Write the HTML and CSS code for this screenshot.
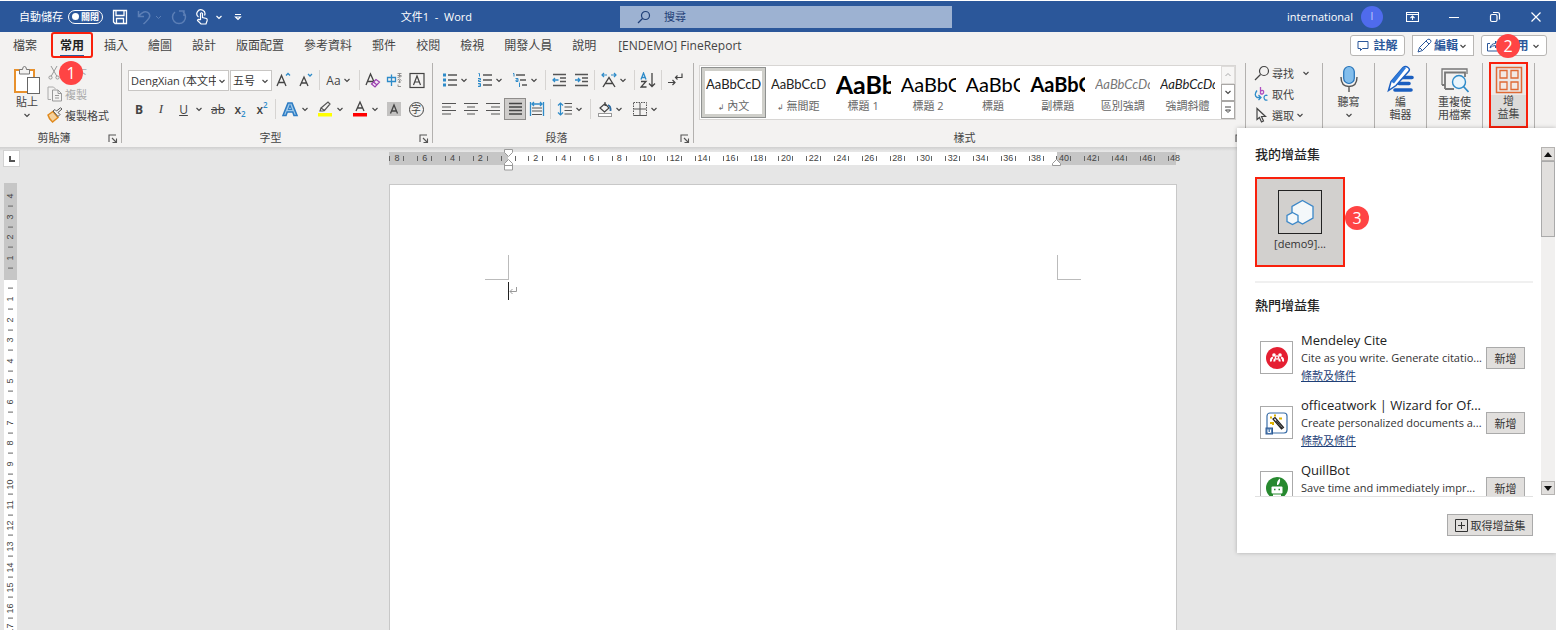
FILE: index.html
```html
<!DOCTYPE html>
<html lang="zh-Hant">
<head>
<meta charset="utf-8">
<title>文件1 - Word</title>
<link rel="stylesheet" href="styles.css">
</head>
<body>
<svg class="defs" aria-hidden="true">
  <symbol id="chev" viewBox="0 0 12 12"><path d="M3.500 5 L6 7.500 L8.500 5" fill="none" stroke="currentColor" stroke-width="1.100"/></symbol>
  <symbol id="launch" viewBox="0 0 10 10"><path d="M1 8V1H8 M4 4L8 8 M8.500 4.500V8.500H4.500" fill="none" stroke="#555" stroke-width="1.100"/></symbol>
</svg>
<div class="window">
  <header class="titlebar">
    <div class="title-left">
      <span class="autosave">自動儲存</span>
      <label class="toggle"><input type="checkbox" aria-label="自動儲存"><span>關閉</span></label>
      <button class="qa qa-save" aria-label="儲存"><svg width="16" height="16" viewBox="0 0 16 16"><path d="M1.500 1.500H14.500V14.500H3L1.500 13Z M4 1.500V6.500H12V1.500 M4.500 14.500V9.500H11.500V14.500" fill="none" stroke="#fff" stroke-width="1.300"/></svg></button>
      <button class="qa qa-undo" aria-label="復原"><svg width="26" height="16" viewBox="0 0 26 16"><path d="M1.500 2V7.500H7 M1.500 7.500C5 2.500 9 1.500 11.500 4C14.500 7 12 10 6.500 15" fill="none" stroke="#5c7fb6" stroke-width="1.500"/><path d="M19 7L21.500 9.500L24 7" fill="none" stroke="#5c7fb6"/></svg></button>
      <button class="qa qa-redo" aria-label="重複"><svg width="16" height="16" viewBox="0 0 16 16"><path d="M4 3A6.500 6.500 0 1 0 12 3 M8 2H13V7" fill="none" stroke="#5c7fb6" stroke-width="1.500"/></svg></button>
      <button class="qa qa-touch" aria-label="觸控/滑鼠模式"><svg width="28" height="16" viewBox="0 0 28 16"><path d="M3.500 8A4 4 0 1 1 9.500 6.500 M5.500 11V4.500Q6.500 3 7.500 4.500V8.500L11.500 9.500Q12.500 10 12 12L11 15H6L2.500 11.500Q3 9.500 5.500 11" fill="none" stroke="#fff" stroke-width="1.200"/><path d="M21.500 7L24 9.500L26.500 7" fill="none" stroke="#fff" stroke-width="1.200"/></svg></button>
      <button class="qa" aria-label="自訂快速存取工具列"><svg width="10" height="10" viewBox="0 0 10 10"><path d="M2 2.500H8 M2.500 5L5 7.500L7.500 5Z" fill="none" stroke="#fff" stroke-width="1.100"/></svg></button>
      <h1 class="doc-title">文件1&nbsp; -&nbsp; Word</h1>
    </div>
    <label class="search"><svg width="14" height="14" viewBox="0 0 14 14"><circle cx="8.500" cy="5.500" r="4" fill="none" stroke="#1f3f77" stroke-width="1.200"/><path d="M5.500 8.500L1 13" stroke="#1f3f77" stroke-width="1.300"/></svg><input type="search" placeholder="搜尋" aria-label="搜尋"></label>
    <div class="title-right">
      <span class="user">international</span><span class="avatar">I</span>
      <button class="win" aria-label="功能區顯示選項"><svg width="13" height="12" viewBox="0 0 13 12"><path d="M.5 1.500H12.500V10.500H.5Z M.5 3.500H12.500 M6.500 9V5 M4.500 7L6.500 5L8.500 7" fill="none" stroke="#fff" stroke-width="1.100"/></svg></button>
      <button class="win" aria-label="最小化"><svg width="12" height="12" viewBox="0 0 12 12"><path d="M1 6.500H11" stroke="#fff"/></svg></button>
      <button class="win" aria-label="還原"><svg width="12" height="12" viewBox="0 0 12 12"><rect x="1.500" y="3.500" width="6.500" height="7" rx="1.500" fill="none" stroke="#fff" stroke-width="1.200"/><path d="M4 1.500H8.500Q10.500 1.500 10.500 3.500V8.500" fill="none" stroke="#fff" stroke-width="1.200"/></svg></button>
      <button class="win" aria-label="關閉"><svg width="12" height="12" viewBox="0 0 12 12"><path d="M1.500 1.500L10.500 10.500M10.500 1.500L1.500 10.500" stroke="#fff" stroke-width="1.200"/></svg></button>
    </div>
  </header>

  <div class="tabbar">
    <nav class="tabs">
      <button class="tab tab-file">檔案</button>
      <button class="tab tab-active"><span>常用</span><b class="badge badge-tab">1</b></button>
      <button class="tab">插入</button><button class="tab">繪圖</button><button class="tab">設計</button>
      <button class="tab">版面配置</button><button class="tab">參考資料</button><button class="tab">郵件</button>
      <button class="tab">校閱</button><button class="tab">檢視</button><button class="tab">開發人員</button>
      <button class="tab">說明</button><button class="tab tab-latin">[ENDEMO] FineReport</button>
    </nav>
    <div class="tab-actions">
      <button class="pill pill-note"><svg width="12" height="12" viewBox="0 0 12 12"><path d="M1 1.500H11V8.500H5.500L3.500 10.500V8.500H1Z" fill="none" stroke="#2b579a"/></svg>註解</button>
      <button class="pill pill-edit"><svg width="15" height="15" viewBox="0 0 15 15"><path d="M1 14L2.500 9.500L10.500 1.500Q12 .5 13.500 2Q14.500 3.500 13.500 4.500L5.500 12.500Z M9 3L12 6 M2.500 9.500L5.500 12.500" fill="none" stroke="#2b579a"/></svg>編輯<svg class="chev" width="12" height="12"><use href="#chev"/></svg></button>
      <button class="pill pill-share"><svg width="14" height="13" viewBox="0 0 14 13"><path d="M4 4.500H1.500V12H11.500V9 M4 9Q5 4.500 9.500 4.500V2L13 5.500L9.500 9V6.500Q6 6.500 4 9Z" fill="none" stroke="#2b579a"/></svg>共用<svg class="chev" width="12" height="12"><use href="#chev"/></svg></button>
    </div>
  </div>

  <div class="ribbon">
    <section class="group g-clip">
      <div class="clip">
        <button class="large paste"><svg width="28" height="30" viewBox="0 0 28 30"><rect x="2" y="5" width="19" height="22" fill="#fff" stroke="#e8912d" stroke-width="2"/><path d="M6.500 9V4.500H9.500Q9.500 1.500 11.500 1.500T13.500 4.500H16.500V9Z" fill="#f3f2f1" stroke="#777"/><rect x="14.500" y="12.500" width="12" height="16" fill="#fff" stroke="#666"/></svg><span>貼上</span><svg class="chev" width="12" height="12"><use href="#chev"/></svg></button>
        <div class="stack stack-clip">
          <button class="line off"><svg width="16" height="16" viewBox="0 0 16 16"><path d="M4 1L10 11.500 M10 1L4 11.500" fill="none" stroke="#999"/><circle cx="3.500" cy="12.500" r="1.600" fill="none" stroke="#999"/><circle cx="10.500" cy="12.500" r="1.600" fill="none" stroke="#999"/></svg>剪下</button>
          <button class="line off"><svg width="16" height="16" viewBox="0 0 16 16"><path d="M4 13.500H1V1H6.500L8.500 3" fill="none" stroke="#aaa"/><path d="M5.500 4H11L14.500 7.500V15H5.500Z M11 4V7.500H14.500 M8 9.500H12 M8 12H12" fill="none" stroke="#999"/></svg>複製</button>
          <button class="line"><svg width="16" height="16" viewBox="0 0 16 16"><path d="M1 8L6 4.500L11 10.500L5.500 15Q2 12 1 8Z" fill="#f6d19b" stroke="#e08a1e" stroke-width="1.500"/><path d="M6 4L11 9.500L13 7.500L11 5.500L15 2L13.500 .8L9.500 4L8 2.500Z" fill="#f3f2f1" stroke="#555"/></svg>複製格式</button>
        </div>
      </div>
      <footer><span>剪貼簿</span><button aria-label="剪貼簿設定"><svg width="10" height="10"><use href="#launch"/></svg></button></footer>
    </section>

    <section class="group g-font">
      <div class="row">
        <div class="combo combo-face"><select aria-label="字型"><option>DengXian (本文中文字型)</option></select><svg class="chev" width="12" height="12"><use href="#chev"/></svg></div>
        <div class="combo combo-size"><select aria-label="字型大小"><option>五号</option></select><svg class="chev" width="12" height="12"><use href="#chev"/></svg></div>
        <button class="t" aria-label="放大字型"><svg width="18" height="18" viewBox="0 0 18 18"><path d="M2 15L6.500 4.500L11 15M3.500 11.500H9.500" fill="none" stroke="#444" stroke-width="1.300"/><path d="M11 4.500L13 2.500L15 4.500" fill="none" stroke="#2e8bc9" stroke-width="1.300"/></svg></button>
        <button class="t" aria-label="縮小字型"><svg width="18" height="18" viewBox="0 0 18 18"><path d="M3 15L7 6L11 15M4.500 12H9.500" fill="none" stroke="#444" stroke-width="1.300"/><path d="M11 3L13 5L15 3" fill="none" stroke="#2e8bc9" stroke-width="1.300"/></svg></button>
        <i class="sep"></i>
        <button class="t wide case">Aa<svg class="chev" width="12" height="12"><use href="#chev"/></svg></button>
        <i class="sep"></i>
        <button class="t" aria-label="清除格式"><svg width="18" height="18" viewBox="0 0 18 18"><path d="M2 14L6.500 3L11 13M3.500 10.500H9" fill="none" stroke="#444" stroke-width="1.300"/><path d="M7.500 13L12 8.500L15.500 11L11 16Z M9.500 11L13 14" fill="#f3e6f5" stroke="#9b3fb0" stroke-width="1.200"/></svg></button>
        <button class="t" aria-label="注音標示"><svg width="18" height="18" viewBox="0 0 18 18"><path d="M1.500 6.500H9.500V10.500H1.500Z M5.500 3.500V15" fill="none" stroke="#2e8bc9" stroke-width="1.300"/><path d="M11.500 2.500H15.500 M11.500 4.500H15.500 M13.500 2V6 M11.500 6.500L15.500 5.500 M11.500 9L13.500 8L15.500 9.500 M12 11H15 M13.500 9V12 M12 13.500V15.500H15" fill="none" stroke="#888" stroke-width=".9"/></svg></button>
        <button class="t" aria-label="字元框線"><svg width="18" height="18" viewBox="0 0 18 18"><rect x="2" y="2.500" width="14" height="14" fill="none" stroke="#444" stroke-width="1.200"/><path d="M5.500 14L9 5L12.500 14M6.500 11H11.500" fill="none" stroke="#444" stroke-width="1.200"/></svg></button>
      </div>
      <div class="row">
        <button class="t bold">B</button><button class="t ital">I</button>
        <button class="t wide"><u>U</u><svg class="chev" width="12" height="12"><use href="#chev"/></svg></button>
        <button class="t strike"><s>ab</s></button>
        <button class="t script">x<sub>2</sub></button><button class="t script">x<sup>2</sup></button>
        <i class="sep"></i>
        <button class="t wide" aria-label="文字效果"><svg width="18" height="18" viewBox="0 0 18 18"><path d="M2 15.500L7 3H11L16 15.500H13L11.800 12H6.200L5 15.500Z" fill="#9cc8ea" stroke="#2e7cc3" stroke-width="1.600"/><path d="M7.500 9.500L9 5.500L10.500 9.500Z" fill="#fff" stroke="#2e7cc3" stroke-width="1.200"/></svg><svg class="chev" width="12" height="12"><use href="#chev"/></svg></button>
        <button class="t wide" aria-label="螢光筆"><svg width="18" height="18" viewBox="0 0 18 18"><path d="M5 8L12 2L14 4L8.500 10.500Z M5 8L4 11H7L8.500 10.500" fill="none" stroke="#555" stroke-width="1.200"/><rect x="2" y="13" width="14" height="3.500" fill="#ff0"/></svg><svg class="chev" width="12" height="12"><use href="#chev"/></svg></button>
        <button class="t wide" aria-label="字型色彩"><svg width="18" height="18" viewBox="0 0 18 18"><path d="M5 11L9 2L13 11M6.500 8H11.500" fill="none" stroke="#444" stroke-width="1.300"/><rect x="2" y="13" width="14" height="3.500" fill="#f00"/></svg><svg class="chev" width="12" height="12"><use href="#chev"/></svg></button>
        <button class="t" aria-label="字元網底"><svg width="18" height="18" viewBox="0 0 18 18"><rect x="2" y="2" width="14" height="14" fill="#c3c2c1"/><path d="M5.500 13.500L9 5L12.500 13.500M6.500 11H11.500" fill="none" stroke="#444" stroke-width="1.300"/></svg></button>
        <button class="t ring"><span>字</span></button>
      </div>
      <footer><span>字型</span><button aria-label="字型設定"><svg width="10" height="10"><use href="#launch"/></svg></button></footer>
    </section>

    <section class="group g-para">
      <div class="row">
        <button class="t wide" aria-label="項目符號"><svg width="16" height="16" viewBox="0 0 16 16"><path d="M6 3H15M6 8H15M6 13H15" stroke="#555" stroke-width="1.300"/><path d="M1 3H4M1 8H4M1 13H4" stroke="#2e8bc9" stroke-width="3"/></svg><svg class="chev" width="12" height="12"><use href="#chev"/></svg></button>
        <button class="t wide" aria-label="編號"><svg width="16" height="16" viewBox="0 0 16 16"><path d="M6 3H15M6 8H15M6 13H15" stroke="#555" stroke-width="1.300"/><path d="M1.500 1.500H2.500V4.500 M1 6.500H3.500V8H1.500V9.500H4 M1 11.500H3.500V14.500H1 M1.500 13H3.500" fill="none" stroke="#2e8bc9"/></svg><svg class="chev" width="12" height="12"><use href="#chev"/></svg></button>
        <button class="t wide" aria-label="多層次清單"><svg width="16" height="16" viewBox="0 0 16 16"><path d="M4 3H13M8 8H14M10 13H15" stroke="#555" stroke-width="1.300"/><path d="M1 1.500H2V4.500 M3.500 6.500H6V9.500H4V8H6 M7.500 11V15 M7.500 9.800V10.400" fill="none" stroke="#2e8bc9"/></svg><svg class="chev" width="12" height="12"><use href="#chev"/></svg></button>
        <i class="sep"></i>
        <button class="t" aria-label="減少縮排"><svg width="16" height="16" viewBox="0 0 16 16"><path d="M2 2.500H15M9 6H15M9 9.500H15M2 13.500H15" stroke="#555" stroke-width="1.300"/><path d="M7.500 8H2M4 6L2 8L4 10" fill="none" stroke="#2e8bc9" stroke-width="1.300"/></svg></button>
        <button class="t" aria-label="增加縮排"><svg width="16" height="16" viewBox="0 0 16 16"><path d="M2 2.500H15M9 6H15M9 9.500H15M2 13.500H15" stroke="#555" stroke-width="1.300"/><path d="M2 8H7.500M5 6L7 8L5 10" fill="none" stroke="#2e8bc9" stroke-width="1.300"/></svg></button>
        <i class="sep"></i>
        <button class="t wide" aria-label="亞洲配置"><svg width="16" height="16" viewBox="0 0 16 16"><path d="M2 15L8 5.500L14 15M4.500 11.500H11.500" fill="none" stroke="#444" stroke-width="1.400"/><path d="M1 3H6M3 1L1 3L3 5 M10 3H15M13 1L15 3L13 5" fill="none" stroke="#2e8bc9" stroke-width="1.200"/></svg><svg class="chev" width="12" height="12"><use href="#chev"/></svg></button>
        <i class="sep"></i>
        <button class="t" aria-label="排序"><svg width="16" height="16" viewBox="0 0 16 16"><path d="M1 7.500L3.500 1L6 7.500M2 5.500H5" fill="none" stroke="#2e8bc9" stroke-width="1.300"/><path d="M1 9.500H6L1 15H6.500 M12 1V14.500M9 11.500L12 14.500L15 11.500" fill="none" stroke="#444" stroke-width="1.300"/></svg></button>
        <i class="sep"></i>
        <button class="t" aria-label="顯示編輯標記"><svg width="16" height="16" viewBox="0 0 16 16"><path d="M15 1.500V5.500H8.500M10.500 3.500L8.500 5.500L10.500 7.500 M1 10.500H8M5.500 8L8 10.500L5.500 13" fill="none" stroke="#444" stroke-width="1.200"/></svg></button>
      </div>
      <div class="row">
        <button class="t" aria-label="靠左對齊"><svg width="16" height="16" viewBox="0 0 16 16"><path d="M1 2.500H15M1 6H10M1 9.500H15M1 13H10" stroke="#555" stroke-width="1.200"/></svg></button>
        <button class="t" aria-label="置中"><svg width="16" height="16" viewBox="0 0 16 16"><path d="M1 2.500H15M4 6H12M1 9.500H15M4 13H12" stroke="#555" stroke-width="1.200"/></svg></button>
        <button class="t" aria-label="靠右對齊"><svg width="16" height="16" viewBox="0 0 16 16"><path d="M1 2.500H15M6 6H15M1 9.500H15M6 13H15" stroke="#555" stroke-width="1.200"/></svg></button>
        <button class="t pressed" aria-label="左右對齊"><svg width="16" height="16" viewBox="0 0 16 16"><path d="M2 2.500H15M2 6H15M2 9.500H15M2 13H15" stroke="#444" stroke-width="1.300"/></svg></button>
        <button class="t" aria-label="分散對齊"><svg width="16" height="16" viewBox="0 0 16 16"><path d="M1.500 1V15M14.500 1V15 M3 3H13M5 1L3 3L5 5M11 1L13 3L11 5" fill="none" stroke="#2e8bc9" stroke-width="1.300"/><path d="M3 7H13M3 10H13M3 13.500H13" stroke="#555" stroke-width="1.200"/></svg></button>
        <i class="sep"></i>
        <button class="t wide" aria-label="行距"><svg width="16" height="16" viewBox="0 0 16 16"><path d="M3.500 2V14M1 4.500L3.500 2L6 4.500M1 11.500L3.500 14L6 11.500" fill="none" stroke="#2e8bc9" stroke-width="1.200"/><path d="M7.500 2.500H15M7.500 6H15M7.500 9.500H15M7.500 13H15" stroke="#555" stroke-width="1.200"/></svg><svg class="chev" width="12" height="12"><use href="#chev"/></svg></button>
        <i class="sep"></i>
        <button class="t wide" aria-label="網底"><svg width="16" height="16" viewBox="0 0 16 16"><path d="M3 7L8 2.500L12 7L7.500 11Z M8 5V1" fill="none" stroke="#444" stroke-width="1.200"/><path d="M11 4Q14 5 13.500 10" fill="none" stroke="#2e6da4" stroke-width="1.800"/><rect x="1.500" y="12.500" width="13" height="3" fill="#fff" stroke="#999"/></svg><svg class="chev" width="12" height="12"><use href="#chev"/></svg></button>
        <button class="t wide" aria-label="框線"><svg width="16" height="16" viewBox="0 0 16 16"><rect x="1.500" y="1.500" width="13" height="13" fill="none" stroke="#555" stroke-dasharray="1.500 1"/><path d="M8 2V14M2 8H14M1.500 14.500H14.500" stroke="#555"/></svg><svg class="chev" width="12" height="12"><use href="#chev"/></svg></button>
      </div>
      <footer><span>段落</span><button aria-label="段落設定"><svg width="10" height="10"><use href="#launch"/></svg></button></footer>
    </section>

    <section class="group g-styles">
      <div class="gallery">
        <div class="tiles">
          <button class="tile tile-on"><span class="s s-body">AaBbCcDc</span><small><em>↲</em> 內文</small></button>
          <button class="tile"><span class="s s-body">AaBbCcDc</span><small><em>↲</em> 無間距</small></button>
          <button class="tile"><span class="s s-h1">AaBb</span><small>標題 1</small></button>
          <button class="tile"><span class="s s-h2">AaBbC</span><small>標題 2</small></button>
          <button class="tile"><span class="s s-h2">AaBbC</span><small>標題</small></button>
          <button class="tile"><span class="s s-sub">AaBbC</span><small>副標題</small></button>
          <button class="tile"><span class="s s-body s-soft">AaBbCcDc</span><small>區別強調</small></button>
          <button class="tile"><span class="s s-body s-em">AaBbCcDc</span><small>強調斜體</small></button>
        </div>
        <div class="spin">
          <button class="spin-off" aria-label="上一列"><svg width="12" height="12" viewBox="0 0 12 12"><path d="M3.500 7L6 4.500L8.500 7" fill="none" stroke="#aaa"/></svg></button>
          <button aria-label="下一列"><svg width="12" height="12"><use href="#chev"/></svg></button>
          <button aria-label="其他"><svg width="12" height="12" viewBox="0 0 12 12"><path d="M3 3H9M3.500 6L6 8.500L8.500 6Z" fill="none" stroke="#444"/></svg></button>
        </div>
      </div>
      <footer><span>樣式</span><button aria-label="樣式設定"><svg width="10" height="10"><use href="#launch"/></svg></button></footer>
    </section>

    <section class="group g-edit">
      <div class="stack">
        <button class="line"><svg width="16" height="16" viewBox="0 0 16 16"><circle cx="10" cy="6" r="4.500" fill="none" stroke="#444" stroke-width="1.200"/><path d="M6.500 9.500L1 15" stroke="#444" stroke-width="1.300"/></svg>尋找<svg class="chev far" width="12" height="12"><use href="#chev"/></svg></button>
        <button class="line"><svg width="16" height="16" viewBox="0 0 16 16"><path d="M6.500 1V8M6.500 5.500Q8 3.500 9.500 5Q10 7.500 8.500 8H6.500" fill="none" stroke="#b04fc0" stroke-width="1.300"/><path d="M13.500 9.500Q10.500 8.500 10 11.500Q10.500 15 13.500 14 M3 4.500Q-.5 9 3 11.500H7M4.500 9L7 11.500L4.500 14" fill="none" stroke="#2e8bc9" stroke-width="1.300"/></svg>取代</button>
        <button class="line"><svg width="16" height="16" viewBox="0 0 16 16"><path d="M3 1.500V12.500L5.500 10.500L7.500 15L9.500 14L7.500 9.500H11.500Z" fill="none" stroke="#444" stroke-width="1.200"/></svg>選取<svg class="chev near" width="12" height="12"><use href="#chev"/></svg></button>
      </div>
    </section>
    <section class="group g-large"><button class="large"><svg width="28" height="30" viewBox="0 0 28 30"><path d="M6 12Q6 21.500 14 21.500T22 12 M14 21.500V27" fill="none" stroke="#555" stroke-width="1.400"/><rect x="8.700" y="1.500" width="10.600" height="17" rx="5.300" fill="#83beec" stroke="#2372b8" stroke-width="1.200"/></svg><span>聽寫</span><svg class="chev" width="12" height="12"><use href="#chev"/></svg></button></section>
    <section class="group g-large"><button class="large"><svg width="28" height="30" viewBox="0 0 28 30"><path d="M15 12.500H25M12 18.500H22M8 25H24" stroke="#1b5fc0" stroke-width="3.600" stroke-linecap="round"/><path d="M1.500 25.500L4 16.500L16 2.500Q18.500 .5 21 2.500T21.500 6.500L9 20.500Z" fill="#fff" stroke="#1b5fc0" stroke-width="1.500"/><path d="M4 16.500L16 2.500Q18 1.500 19 3L7 18.500Z" fill="#2f7ad9"/></svg><span>編<br>輯器</span></button></section>
    <section class="group g-reuse"><button class="large"><svg width="28" height="30" viewBox="0 0 28 30"><path d="M1 20V4H26V9" fill="none" stroke="#777" stroke-width="1.300"/><path d="M4 24V7.500H24V12 M1 20H4 M4 24H13" fill="none" stroke="#777" stroke-width="1.800"/><circle cx="18" cy="17" r="6.500" fill="#e9f5fc" stroke="#2e8bc9" stroke-width="1.400"/><path d="M22.500 21.500L27.500 27" stroke="#2e8bc9" stroke-width="1.700"/></svg><span>重複使<br>用檔案</span></button></section>
    <section class="group g-addin"><button class="large addin"><svg width="28" height="28" viewBox="0 0 28 28"><rect x="1.500" y="1.500" width="25" height="25" fill="none" stroke="#df6a35" stroke-width="1.500"/><path d="M5 4.500H12V12H5ZM16 4.500H23V12H16ZM5 16H12V23.500H5ZM16 16H23V23.500H16Z" fill="#f3e9e4" stroke="#df6a35" stroke-width="1.300"/></svg><span>增<br>益集</span><b class="badge badge-addin">2</b></button></section>
  </div>

  <main class="workspace">
    <div class="side">
      <button class="tabstop" aria-label="定位點"><svg width="8" height="8" viewBox="0 0 8 8"><path d="M2 1V6H7" fill="none" stroke="#555" stroke-width="2"/></svg></button>
      <ol class="vruler"><li>4</li><li>3</li><li>2</li><li>1</li><li></li><li>1</li><li>2</li><li>3</li><li>4</li><li>5</li><li>6</li><li>7</li><li>8</li><li>9</li><li>10</li><li>11</li><li>12</li><li>13</li><li>14</li><li>15</li><li>16</li><li>17</li></ol>
    </div>
    <div class="canvas">
      <div class="hruler">
        <ol><li>8</li><li>6</li><li>4</li><li>2</li><li></li><li>2</li><li>4</li><li>6</li><li>8</li><li>10</li><li>12</li><li>14</li><li>16</li><li>18</li><li>20</li><li>22</li><li>24</li><li>26</li><li>28</li><li>30</li><li>32</li><li>34</li><li>36</li><li>38</li><li>40</li><li>42</li><li>44</li><li>46</li><li>48</li></ol>
        <svg class="mark mark-left" width="9" height="22" viewBox="0 0 9 22"><path d="M.5 .5H8.500V3.500L4.500 7.500L.5 3.500Z M4.500 10.500L8.500 14.500V21H.5V14.500Z M.5 16.500H8.500" fill="#fff" stroke="#999"/></svg>
        <svg class="mark mark-right" width="9" height="7" viewBox="0 0 9 7"><path d="M4.500 .5L8.500 4.500V6.500H.5V4.500Z" fill="#fff" stroke="#999"/></svg>
      </div>
      <article class="page">
        <div class="crops"><i class="crop-l"></i><i class="crop-r"></i></div>
        <p class="para"><svg width="9" height="10" viewBox="0 0 9 10"><path d="M7.500 1V5.500H1M3.500 3L1 5.500L3.500 8" fill="none" stroke="#999"/></svg></p>
      </article>
    </div>
  </main>

  <aside class="panel">
    <div class="panel-main">
      <div class="panel-scroll">
        <h2>我的增益集</h2>
        <button class="card"><span class="card-icon"><svg width="30" height="28" viewBox="0 0 30 28"><path d="M17.500 2.500L28 8.500V20L17.500 26L7 20V8.500Z" fill="#f4f8fa" stroke="#3b87c8" stroke-width="1.300"/><path d="M7.500 14.500L13 17.500V23.500L7.500 26.500L2 23.500V17.500Z" fill="#f4f8fa" stroke="#3b87c8" stroke-width="1.300"/></svg></span><span>[demo9]...</span><b class="badge badge-card">3</b></button>
        <hr>
        <h2>熱門增益集</h2>
        <div class="item">
          <span class="item-icon"><svg width="24" height="24" viewBox="0 0 24 24"><circle cx="12" cy="12" r="11" fill="#e51f32"/><path d="M6 15.500Q5.500 12 8 11.500M18 15.500Q18.500 12 16 11.500M9.500 15.500Q9 13.500 10.500 13M14.500 15.500Q15 13.500 13.500 13" fill="none" stroke="#fff" stroke-width="2"/><circle cx="9" cy="9" r="1.800" fill="#fff"/><circle cx="15" cy="9" r="1.800" fill="#fff"/><circle cx="12" cy="11.500" r="2.200" fill="#fff"/><circle cx="12" cy="11.500" r=".9" fill="#e51f32"/></svg></span>
          <div class="item-text"><h3>Mendeley Cite</h3><p>Cite as you write. Generate citatio...</p><a href="#">條款及條件</a></div>
          <button class="add">新增</button>
        </div>
        <div class="item">
          <span class="item-icon"><svg width="24" height="24" viewBox="0 0 24 24"><rect x="2" y="2" width="20" height="20" rx="3" fill="#fff" stroke="#3a6ea8" stroke-width="1.200"/><path d="M8 8L10 6.500L18.500 16.500L16.500 18Z" fill="#fff" stroke="#222" stroke-width="1.200"/><path d="M11 9.500L17 17" stroke="#222" stroke-width="1.200"/><path d="M5 6.500H7M9 4.500H11M14 7.500H17M5 12H7.500M8 11V14" stroke="#e0b400" stroke-width="2"/><rect x="1" y="17" width="6.500" height="6" fill="#5d86b7" stroke="#2f5b94"/><path d="M3 18.500V21.500H5.500V18.500" stroke="#fff" fill="none"/></svg></span>
          <div class="item-text"><h3>officeatwork | Wizard for Of...</h3><p>Create personalized documents a...</p><a href="#">條款及條件</a></div>
          <button class="add">新增</button>
        </div>
        <div class="item">
          <span class="item-icon"><svg width="24" height="24" viewBox="0 0 24 24"><circle cx="12" cy="12" r="11" fill="#27892f"/><path d="M12 9Q11.500 4.500 15 2.500Q15.500 6.500 13 9Z" fill="#fff"/><rect x="6.500" y="10.500" width="11" height="7" rx="1" fill="#fff"/><path d="M9 13.500H10.500M13.500 13.500H15" stroke="#27892f" stroke-width="1.600"/><rect x="8" y="18.500" width="8" height="4" fill="#fff"/></svg></span>
          <div class="item-text"><h3>QuillBot</h3><p>Save time and immediately impr...</p><a href="#">條款及條件</a></div>
          <button class="add">新增</button>
        </div>
      </div>
      <div class="scrollbar">
        <button aria-label="向上捲動"><svg width="8" height="5" viewBox="0 0 8 5"><path d="M0 5L4 0L8 5Z" fill="#111"/></svg></button>
        <div class="thumb"></div>
        <button class="down" aria-label="向下捲動"><svg width="8" height="5" viewBox="0 0 8 5"><path d="M0 0L4 5L8 0Z" fill="#111"/></svg></button>
      </div>
    </div>
    <div class="panel-foot"><button class="more"><svg width="13" height="13" viewBox="0 0 13 13"><path d="M.5 .5H12.500V12.500H.5ZM6.500 3V10M3 6.500H10" fill="none" stroke="#333"/></svg>取得增益集</button></div>
  </aside>
</div>
</body>
</html>
```
FILE: styles.css
```css
* { box-sizing: border-box; }
body { margin: 0; background: #fff; color: #444; font: 11px/13px "Open Sans", "Noto Sans CJK TC", sans-serif; }
button { font: inherit; color: inherit; background: none; border: 0; padding: 0; margin: 0; white-space: nowrap; }
h1, h2, h3, p, ol { margin: 0; padding: 0; font: inherit; list-style: none; }
svg { display: block; flex: none; }
.defs { position: absolute; width: 0; height: 0; }
.window { position: relative; display: flex; flex-direction: column; height: calc(100vh - 7px); margin: 1px 2px 6px 0; background: #e6e6e6; overflow: hidden; }

.titlebar { display: grid; grid-template-columns: 620fr 332fr 604fr; align-items: center; flex: none; height: 31px; background: #2b579a; color: #fff; }
.title-left, .title-right { display: flex; align-items: center; }
.title-left { padding-left: 19px; }
.toggle { display: flex; align-items: center; gap: 2px; height: 14px; margin: 0 9px 0 5px; padding: 0 3px; border: 1px solid #fff; border-radius: 7px; font-size: 9px; font-weight: 700; }
.toggle input { appearance: none; width: 7px; height: 7px; margin: 0; border-radius: 50%; background: #fff; }
.qa-save { margin-right: 9px; }
.qa-undo { margin-right: 8px; }
.qa-redo { margin-right: 8px; }
.qa-touch { margin-right: 10px; }
.doc-title { margin: 0 148px 0 auto; font-size: 11px; white-space: nowrap; }
.search { display: flex; align-items: center; gap: 13px; height: 22px; padding-left: 17px; background: #9db2d2; }
.search input { flex: 1; min-width: 0; padding: 0; border: 0; background: none; font: inherit; outline: 0; }
.search input::placeholder { color: #1f3f77; opacity: 1; }
.title-right { justify-content: flex-end; }
.avatar { display: grid; place-items: center; width: 22px; height: 22px; margin: 0 9px 0 8px; border-radius: 50%; background: #4f6bed; color: #c7d0fb; font-size: 10px; }
.win { display: grid; place-items: center; width: 41px; height: 31px; }

.tabbar { display: flex; justify-content: space-between; flex: none; height: 28px; padding-top: 2px; background: #f3f2f1; }
.tabs { display: flex; gap: 6px; padding-left: 6px; }
.tab { height: 22px; padding: 0 7px; font-size: 12px; }
.tab-file { margin-right: 3px; }
.tab-latin { margin-left: 2px; }
.tab-active { position: relative; outline: 2px solid #f9200c; border-radius: 1px; color: #222; font-weight: 500; }
.tab-active span { display: block; height: 21px; line-height: 21px; border-bottom: 1px solid #2b579a; font-weight: 700; }
.tab-actions { display: flex; gap: 7px; padding: 1px 9px 0 0; }
.pill { display: flex; align-items: center; justify-content: center; gap: 4px; height: 21px; border: 1px solid #b8b6b4; border-radius: 3px; background: #fff; color: #2b579a; font-size: 12px; font-weight: 700; }
.pill .chev { margin-left: -3px; }
.pill-note { width: 55px; }
.pill-edit { width: 62px; gap: 2px; border-radius: 0; }
.pill-share { width: 66px; }
.badge { position: absolute; z-index: 5; display: grid; place-items: center; width: 24px; height: 24px; border-radius: 50%; background: #ff4444; color: #fff; font: 16px/24px "Open Sans", sans-serif; }
.badge-tab { left: 6px; top: 27px; }
.badge-addin { left: 5px; top: -30px; }
.badge-card { right: -26px; top: 27px; }

.ribbon { display: flex; flex: none; height: 87px; padding: 3px 21px 4px 0; background: #f3f2f1; }
.group { display: flex; flex-direction: column; flex: none; border-right: 1px solid #b3b1af; }
.group footer { display: flex; align-items: center; height: 12px; margin-top: auto; }
.group footer span { flex: 1; text-align: center; }
.group footer button { margin: 3px 3px 0 0; }
.row { display: flex; align-items: center; height: 22px; }
.row + .row { margin-top: 7px; }
.t { display: flex; align-items: center; justify-content: center; flex: none; width: 22px; height: 22px; }
.t.wide { width: 35px; }
.sep { flex: none; width: 1px; height: 20px; margin: 0 2px; background: #d6d4d2; }
.chev { color: #444; }
.large { display: flex; flex-direction: column; align-items: center; padding-top: 2px; }
.large .chev { margin-top: 1px; }
.stack { display: flex; flex-direction: column; align-items: flex-start; gap: 1px; }
.line { display: flex; align-items: center; gap: 2px; height: 20px; }
.stack-clip .line { height: 20px; }
.off { color: #aaa; }

.g-clip { width: 122px; }
.clip { display: flex; gap: 6px; padding-left: 13px; }
.g-font { width: 311px; padding-top: 6px; }
.g-font .row { padding-left: 6px; }
.combo { position: relative; flex: none; height: 21px; margin-right: 1px; background: #fff; border: 1px solid #c8c6c4; }
.combo select { appearance: none; width: 100%; height: 19px; padding: 0 12px 0 2px; border: 0; border-radius: 0; background: #fff; color: #333; font: inherit; }
.combo .chev { position: absolute; right: 0; top: 4px; }
.combo-face { width: 101px; }
.combo-size { width: 42px; }
.case { font-size: 12px; }
.bold { font-size: 12px; font-weight: 700; }
.ital { font: italic 13px "Liberation Serif", serif; }
.t u, .t s { width: 18px; text-align: center; font-size: 12px; }
.script { font-size: 12px; font-weight: 600; }
.script sub, .script sup { color: #2e8bc9; font-size: 8px; line-height: 8px; }
.script sub { align-self: flex-end; margin-bottom: 2px; }
.script sup { align-self: flex-start; margin-top: 3px; }
.ring span { width: 15px; height: 15px; border: 1px solid #444; border-radius: 50%; font-size: 10px; line-height: 13px; }
.g-para { width: 261px; padding-top: 6px; }
.g-para .row { padding-left: 5px; }
.pressed { border: 1px solid #8f8d8b; background: #cfcdcb; }

.g-styles { flex: 1; min-width: 0; padding-top: 2px; }
.g-styles footer button { margin-right: 0; }
.gallery { display: flex; height: 55px; margin: 0 9px 0 5px; border: 1px solid #d8d6d4; background: #fff; }
.tiles { display: grid; grid-template-columns: repeat(8, 1fr); flex: 1; min-width: 0; padding: 1px; }
.tile { display: flex; flex-direction: column; align-items: stretch; min-width: 0; padding: 1px 5px 0; overflow: hidden; }
.tile-on { padding: 0 4px; border: 1px solid #8f9190; outline: 3px solid #cfcfca; outline-offset: -4px; }
.s { display: block; height: 32px; overflow: hidden; color: #222; text-align: left; line-height: 32px; font-family: Lato, sans-serif; }
.s-body { font-size: 13px; }
.s-h1 { color: #000; font-size: 25px; font-weight: 700; }
.s-h2 { color: #000; font-size: 20px; }
.s-sub { color: #000; font-size: 20px; font-weight: 700; }
.s-soft { color: #777; font-style: italic; }
.s-em { font-style: italic; }
.tile small { color: #666; font-size: 11px; line-height: 12px; text-align: center; }
.tile em { font: 8px/8px "DejaVu Sans", sans-serif; }
.spin { display: grid; grid-template-rows: repeat(3, 1fr); width: 14px; }
.spin button { display: grid; place-items: center; border: 1px solid #aaa8a6; }
.spin .spin-off { border-color: #dedcda; background: #f7f6f5; }

.g-edit { width: 77px; padding-left: 8px; }
.far { margin-left: 4px; }
.near { margin-left: -2px; }
.g-large { width: 52px; }
.g-reuse { width: 56px; }
.g-addin { width: 52px; align-items: center; }
.addin { position: relative; width: 35px; height: 62px; margin-top: 1px; outline: 2px solid #f9200c; background: linear-gradient(#ebe9e8 50%, #dddbd9 50%); }

.workspace { display: flex; flex: 1; min-height: 0; background: linear-gradient(#cfcfcf, #e6e6e6 4px); }
.side { flex: none; width: 20px; padding: 3px 0 0 3px; }
.tabstop { display: grid; place-items: center; width: 17px; height: 17px; margin-bottom: 16px; border: 1px solid #d2d2d2; background: #fff; }
.vruler { display: grid; grid-template-rows: repeat(22, 1fr); width: 13px; height: 456px; margin-left: 1px; padding-top: 3px; background: linear-gradient(#c6c6c6 97px, #fff 97px); font: 9px/13px "Liberation Sans", sans-serif; }
.vruler li { position: relative; display: flex; align-items: center; justify-content: center; writing-mode: vertical-rl; transform: rotate(180deg); }
.vruler li::after { content: ""; position: absolute; top: 0; left: 4px; width: 5px; height: 1px; background: #666; }
.canvas { display: flex; flex-direction: column; align-items: center; flex: 1; min-width: 0; padding: 5px 11px 0 0; }
.hruler { position: relative; flex: none; width: 787px; height: 13px; background: linear-gradient(90deg, #c6c6c6 119px, #fff 119px 668px, #c6c6c6 668px); font: 9px/13px "Liberation Sans", sans-serif; }
.hruler ol { display: grid; grid-template-columns: repeat(29, 1fr); width: 806px; margin-left: -6px; }
.hruler li { display: grid; grid-template-columns: 1px 13px 1px; justify-content: center; align-items: center; height: 13px; text-align: center; }
.hruler li::before, .hruler li::after { content: ""; grid-row: 1; height: 5px; background: #666; }
.hruler li::before { grid-column: 1; }
.hruler li::after { grid-column: 3; }
.hruler li:last-child::after { background: none; }
.mark { position: absolute; }
.mark-left { left: 115px; top: -3px; }
.mark-right { right: 115px; top: 7px; }
.page { flex: 1; width: 788px; margin-top: 19px; padding-top: 70px; border: 1px solid #c8c8c8; border-bottom: 0; background: #fff; }
.crops { display: flex; justify-content: space-between; padding: 0 95px; }
.crops i { width: 24px; height: 25px; border-bottom: 1px solid #bbb; }
.crop-l { border-right: 1px solid #bbb; }
.crop-r { border-left: 1px solid #bbb; }
.para { display: flex; align-items: center; height: 18px; margin: 2px 118px; border-left: 1px solid #222; }

.panel { position: absolute; right: 0; top: 127px; width: 319px; background: #fff; box-shadow: 0 0 4px rgba(0, 0, 0, .25); color: #333; }
.panel-main { display: flex; padding: 19px 1px 0 18px; }
.panel-scroll { flex: 1; min-width: 0; height: 350px; margin-right: 8px; border-bottom: 1px solid #e1e1e1; overflow: hidden; }
.panel h2 { color: #222; font-size: 13px; font-weight: 500; line-height: 14px; }
.card { position: relative; display: flex; flex-direction: column; align-items: center; gap: 3px; width: 90px; height: 90px; margin-top: 16px; padding-top: 11px; border: 2px solid #f9200c; background: #d2d0ce; }
.card-icon { display: grid; place-items: center; width: 44px; height: 44px; border: 1px solid #222; }
.panel hr { height: 2px; margin: 14px 0 15px; border: 0; background: #f0f0f0; }
.item { display: flex; align-items: flex-start; height: 65px; padding: 0 8px 0 5px; }
.panel h2 + .item { margin-top: 20px; }
.item-icon { display: grid; place-items: center; flex: none; width: 33px; height: 33px; margin-top: 9px; border: 1px solid #aaa; }
.item-text { flex: 1; min-width: 0; padding-left: 8px; white-space: nowrap; line-height: 17px; }
.item-text h3 { color: #222; font-size: 13px; line-height: 17px; }
.item-text p { line-height: 18px; }
.item-text a { color: #1f3f77; }
.add, .more { border: 1px solid #aaa; background: #e1dfdd; }
.add { flex: none; width: 39px; height: 22px; margin-top: 15px; }
.scrollbar { display: flex; flex-direction: column; width: 14px; height: 348px; background: #f1f0ef; }
.scrollbar button { display: grid; place-items: center; width: 14px; height: 14px; border: 1px solid #b5b3b1; background: #e1dfdd; }
.thumb { height: 76px; border: 1px solid #aaa; background: #e1dfdd; }
.scrollbar .down { margin-top: auto; }
.panel-foot { display: flex; justify-content: flex-end; padding: 17px 23px 17px; }
.more { display: flex; align-items: center; justify-content: center; gap: 3px; width: 86px; height: 22px; }
```
